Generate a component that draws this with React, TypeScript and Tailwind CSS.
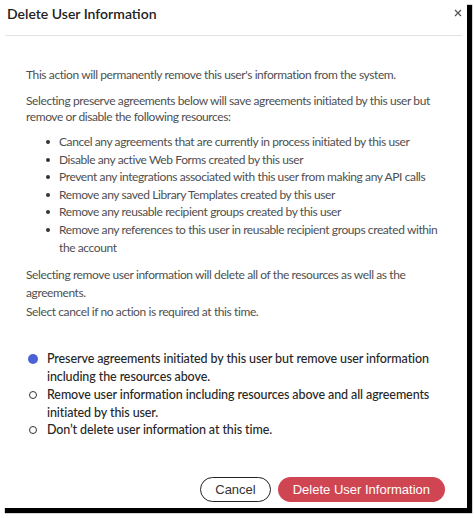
import { useState } from 'react';

const resources = [
  'Cancel any agreements that are currently in process initiated by this user',
  'Disable any active Web Forms created by this user',
  'Prevent any integrations associated with this user from making any API calls',
  'Remove any saved Library Templates created by this user',
  'Remove any reusable recipient groups created by this user',
  'Remove any references to this user in reusable recipient groups created within the account',
];

const options = [
  {
    id: 'preserve',
    label: 'Preserve agreements initiated by this user but remove user information including the resources above.',
  },
  {
    id: 'remove',
    label: 'Remove user information including resources above and all agreements initiated by this user.',
  },
  { id: 'keep', label: 'Don\u2019t delete user information at this time.' },
];

const App = () => {
  const [choice, setChoice] = useState('preserve');

  return (
    <div className="w-[474px] h-[518px] bg-white">
      <div className="w-[467px] h-[508px] bg-white shadow-[5px_5px_1px_#000] flex flex-col font-['Lato',sans-serif]">
        {/* header */}
        <div className="mx-[5px] h-[36px] border-b border-[#e2e2e2] flex items-start justify-between pt-[4px]">
          <h2 className="pl-[2px] text-[14px] font-semibold text-[#222] leading-[20px]">
            Delete User Information
          </h2>
          <button className="mt-[4px] mr-[-1px] w-[10px] h-[10px] flex items-center justify-center text-[#555]">
            <svg width="8" height="8" viewBox="0 0 8 8">
              <path d="M1 1L7 7M7 1L1 7" stroke="currentColor" strokeWidth="1.3" />
            </svg>
          </button>
        </div>

        {/* body */}
        <div className="pl-[26px] pr-[26px] pt-[31px] text-[12px] tracking-[-0.4px] text-[#4f4f4f]">
          <p className="leading-[16px]">
            This action will permanently remove this user's information from the system.
          </p>
          <p className="mt-[10px] leading-[16px]">
            Selecting preserve agreements below will save agreements initiated by this user but
            remove or disable the following resources:
          </p>
          <ul className="mt-[8px] leading-[17.6px]">
            {resources.map((item) => (
              <li key={item} className="flex items-start">
                <span className="w-[4px] h-[4px] mt-[7px] ml-[20px] mr-[9px] rounded-full bg-[#333] shrink-0"></span>
                <span>{item}</span>
              </li>
            ))}
          </ul>
          <p className="mt-[10px] leading-[18px]">
            Selecting remove user information will delete all of the resources as well as the
            agreements.
          </p>
          <p className="mt-[1px] leading-[18px]">Select cancel if no action is required at this time.</p>

          <div className="mt-[29px] leading-[17.8px] text-[12.5px] font-medium tracking-[-0.1px] text-[#262626]">
            {options.map((opt) => (
              <label key={opt.id} className="flex items-start cursor-pointer" onClick={() => setChoice(opt.id)}>
                {choice === opt.id ? (
                  <span className="w-[10px] h-[10px] mt-[4px] ml-[2px] mr-[9px] rounded-full bg-[#4a62d6] shrink-0"></span>
                ) : (
                  <span className="w-[8px] h-[8px] mt-[5px] ml-[3px] mr-[10px] rounded-full border-[1.5px] border-[#333] shrink-0"></span>
                )}
                <span>{opt.label}</span>
              </label>
            ))}
          </div>
        </div>

        {/* footer */}
        <div className="mt-auto mb-[6px] pr-[22px] flex justify-end gap-[7px] font-['Liberation_Sans',sans-serif] text-[13px]">
          <button className="h-[25px] px-[14px] rounded-full border-[1.5px] border-[#222] text-[#333]">
            Cancel
          </button>
          <button className="h-[25px] px-[15px] rounded-full bg-[#cf4652] text-white">
            Delete User Information
          </button>
        </div>
      </div>
    </div>
  );
};

export default App;
